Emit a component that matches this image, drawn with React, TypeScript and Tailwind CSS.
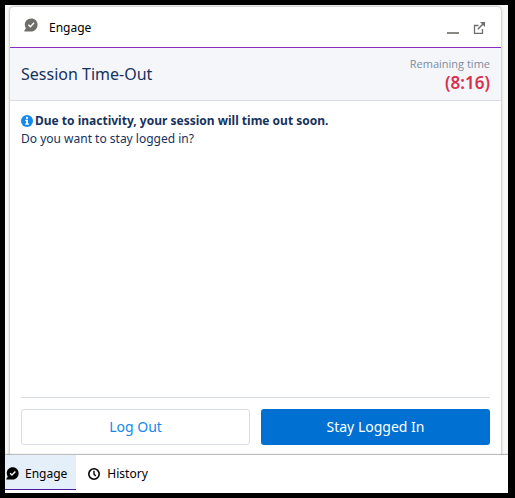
import { useState } from "react";

function ChatCheckIcon({ className }: { className?: string }) {
  return (
    <svg viewBox="0 0 14 14" className={className} aria-hidden="true">
      <path
        fill="currentColor"
        d="M7.2.4C3.6.4.8 3.2.8 6.7c0 1.3.4 2.5 1.1 3.5L.3 12.8c-.2.4 0 .7.5.7h6.4c3.6 0 6.4-3.2 6.4-6.8S10.8.4 7.2.4z"
      />
      <path
        d="M4.4 6.7l2 2 3.7-3.9"
        fill="none"
        stroke="#fff"
        strokeWidth="1.5"
      />
    </svg>
  );
}

function PopOutIcon() {
  return (
    <svg viewBox="0 0 12 12" className="size-3" fill="none" stroke="currentColor" aria-hidden="true">
      <path d="M5.5 3.5h-4v8h8V7" strokeWidth="1.3" />
      <path d="M4.8 7.2L10 2" strokeWidth="1.5" />
      <path d="M7 0h5v5z" fill="currentColor" stroke="none" />
    </svg>
  );
}

function ClockIcon() {
  return (
    <svg viewBox="0 0 12 12" className="size-3" fill="none" stroke="currentColor" aria-hidden="true">
      <circle cx="6" cy="6" r="5.2" strokeWidth="1.6" />
      <path d="M6 2.8v3.4l1.8 1.8" strokeWidth="1.4" />
    </svg>
  );
}

function InfoIcon() {
  return (
    <svg viewBox="0 0 12 12" className="size-3 shrink-0" aria-hidden="true">
      <circle cx="6" cy="6" r="6" fill="#1589ee" />
      <circle cx="6" cy="2.9" r="1.1" fill="#fff" />
      <path d="M4.3 4.8H7v3.7h.9v1.2H4.2V8.5h.9V6h-.8z" fill="#fff" />
    </svg>
  );
}

export default function App() {
  const [tab, setTab] = useState("engage");

  return (
    <div className="flex min-h-screen flex-col border-5 border-r-7 border-black bg-[#f8f8f7] font-['Noto_Sans','Liberation_Sans',sans-serif] text-xs leading-[18px] text-black">
      <main className="mx-[5px] mt-[2px] mr-[7px] flex flex-1 flex-col rounded-t bg-white shadow-[0_0_3px_#00000066]">
        <header className="flex h-10 items-center justify-between px-3 pt-px">
          <div className="flex items-center gap-[11px] pl-[2px]">
            <ChatCheckIcon className="mb-[5px] size-3.5 text-[#706e6b]" />
            <h1>Engage</h1>
          </div>
          <div className="flex items-center gap-[14px] pr-1 text-[#706e6b]">
            <button aria-label="Minimize" className="flex h-3 w-3 items-end">
              <span className="h-[2px] w-full bg-[#8a8885]" />
            </button>
            <button aria-label="Pop out">
              <PopOutIcon />
            </button>
          </div>
        </header>

        <div className="flex h-[54px] items-center justify-between border-t border-b border-t-[#8a2bc0] border-b-[#d8dde6] bg-[#f4f6fa] px-[11px]">
          <h2 className="text-base text-[#16325c]">Session Time-Out</h2>
          <div className="text-right">
            <p className="font-['Open_Sans','Noto_Sans',sans-serif] text-[11px] text-[#7f8b9d]">Remaining time</p>
            <p className="text-[17px] leading-5 font-semibold text-[#d9304c]">(8:16)</p>
          </div>
        </div>

        <section className="flex-1 px-[11px] pt-[11px] text-[#16325c]">
          <p className="flex items-center gap-[2px] font-bold">
            <InfoIcon />
            Due to inactivity, your session will time out soon.
          </p>
          <p>Do you want to stay logged in?</p>
        </section>

        <div className="mx-[11px] grid grid-cols-2 gap-[11px] border-t border-[#d8dde6] pt-[11px] pb-[10px] text-sm">
          <button className="h-9 rounded-[3px] border border-[#d8dde6] bg-white text-[#1589ee]">
            Log Out
          </button>
          <button className="h-9 rounded-[3px] bg-[#0070d2] text-white">
            Stay Logged In
          </button>
        </div>
      </main>

      <nav className="z-10 flex h-[38px] bg-white shadow-[0_-1px_1px_#00000040]">
        <button
          onClick={() => setTab("engage")}
          className={`mb-[3px] flex items-center gap-[6px] border-b pt-[3px] pr-[9px] pl-px ${
            tab === "engage" ? "border-[#4b1a96] bg-[#e5effa]" : "border-transparent"
          }`}
        >
          <ChatCheckIcon className="size-[13px]" />
          Engage
        </button>
        <button
          onClick={() => setTab("history")}
          className={`mb-[3px] flex items-center gap-[7px] border-b px-3 pt-[3px] ${
            tab === "history" ? "border-[#4b1a96] bg-[#e5effa]" : "border-transparent"
          }`}
        >
          <ClockIcon />
          History
        </button>
      </nav>
    </div>
  );
}
